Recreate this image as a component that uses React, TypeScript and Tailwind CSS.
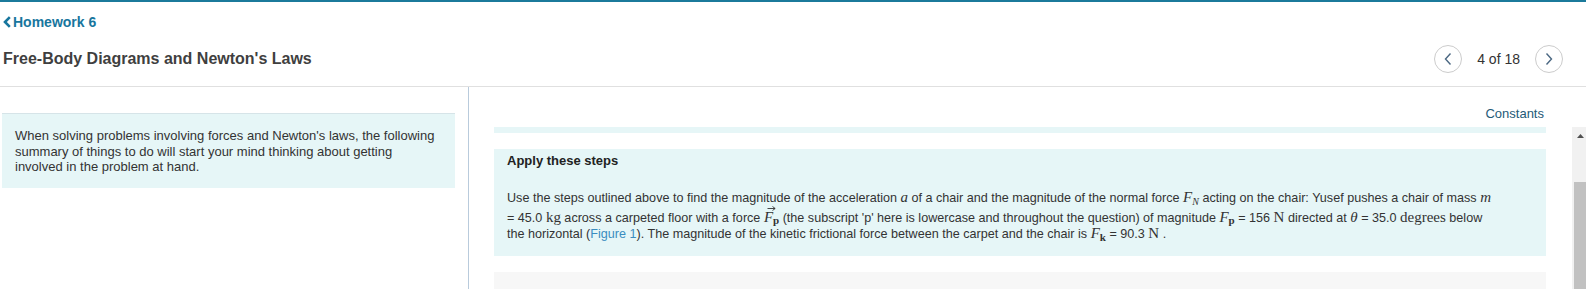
const math = "font-['Liberation_Serif','DejaVu_Serif',serif] text-[15px] leading-none";

const Chevron = ({ dir }: { dir: "left" | "right" }) => (
  <svg width="8" height="14" viewBox="0 0 8 14" aria-hidden="true">
    <polyline
      points={dir === "left" ? "6.5,1.5 1.5,7 6.5,12.5" : "1.5,1.5 6.5,7 1.5,12.5"}
      fill="none"
      stroke="#4a6782"
      strokeWidth="1.4"
    />
  </svg>
);

const NavButton = ({ dir }: { dir: "left" | "right" }) => (
  <button className="flex h-[28px] w-[28px] items-center justify-center rounded-full border border-[#cccccc] bg-white">
    <Chevron dir={dir} />
  </button>
);

const VecF = ({ sub }: { sub: string }) => (
  <span className="relative inline-block pt-[3px]">
    <svg className="absolute left-[3px] top-[-1px]" width="9" height="5" viewBox="0 0 9 5" aria-hidden="true">
      <line x1="0.5" y1="2.5" x2="8" y2="2.5" stroke="#333333" strokeWidth="0.9" />
      <polyline points="5.5,0.5 8.2,2.5 5.5,4.5" fill="none" stroke="#333333" strokeWidth="0.9" />
    </svg>
    <i className={math}>F</i>
    <sub className="font-['Liberation_Serif',serif] text-[11px] font-bold">{sub}</sub>
  </span>
);

export default function App() {
  return (
    <div className="h-[289px] w-[1586px] overflow-hidden border-t-2 border-[#1b7a9b] bg-white font-['Liberation_Sans',Arial,sans-serif] text-[#333333]">
      <header className="border-b border-[#e0e0e0] pb-[13px] pl-[3px] pr-[23px] pt-[11px]">
        <a className="flex h-[18px] items-center gap-[1px] text-[14px] font-bold text-[#18769e]">
          <svg width="9" height="12" viewBox="0 0 9 12" aria-hidden="true">
            <polyline points="6.8,1.2 2,6 6.8,10.8" fill="none" stroke="#18769e" strokeWidth="2.6" />
          </svg>
          Homework 6
        </a>
        <div className="mt-[14px] flex h-[28px] items-center justify-between">
          <h1 className="text-[16px] font-bold text-[#3f3f3f]">Free-Body Diagrams and Newton's Laws</h1>
          <div className="flex items-center gap-[15px]">
            <NavButton dir="left" />
            <span className="text-[14px] text-[#333333]">4 of 18</span>
            <NavButton dir="right" />
          </div>
        </div>
      </header>

      <div className="flex h-[202px]">
        <aside className="w-[469px] shrink-0 border-r border-[#b9cbdc] pl-[2px] pr-[13px] pt-[26px]">
          <div className="border-t border-[#d6e4e8] bg-[#e6f6f7] px-[13px] pb-[13px] pt-[14px] text-[13px] leading-[15.5px]">
            When solving problems involving forces and Newton's laws, the following summary of things to do will start
            your mind thinking about getting involved in the problem at hand.
          </div>
        </aside>

        <main className="flex flex-1 flex-col">
          <div className="pb-[5px] pr-[42px] pt-[19px] text-right text-[13px] leading-[16px] text-[#245a78]">
            Constants
          </div>
          <div className="flex flex-1">
            <div className="flex-1 pl-[25px] pr-[26px]">
              <div className="h-[6px] bg-[#e6f6f7]" />
              <section className="mt-[16px] bg-[#e6f6f7] px-[13px] pb-[13px] pt-[4px]">
                <h2 className="text-[13px] font-bold leading-[16px] text-[#222222]">Apply these steps</h2>
                <p className="mt-[21px] text-[12.6px] leading-[15.6px]">
                  Use the steps outlined above to find the magnitude of the acceleration <i className={math}>a</i> of a
                  chair and the magnitude of the normal force{" "}
                  <span className="whitespace-nowrap">
                    <i className={math}>F</i>
                    <sub className="font-['Liberation_Serif',serif] text-[10px]">
                      <i>N</i>
                    </sub>
                  </span>{" "}
                  acting on the chair: Yusef pushes a chair of mass <i className={math}>m</i>
                  <br />= 45.0 <span className={math}>kg</span> across a carpeted floor with a force <VecF sub="p" />{" "}
                  (the subscript 'p' here is lowercase and throughout the question) of magnitude{" "}
                  <i className={math}>F</i>
                  <sub className="font-['Liberation_Serif',serif] text-[11px] font-bold">p</sub> = 156{" "}
                  <span className={math}>N</span> directed at <i className={math}>θ</i> = 35.0{" "}
                  <span className={math}>degrees</span> below
                  <br />
                  the horizontal (<span className="text-[#3a8dc0]">Figure 1</span>). The magnitude of the kinetic
                  frictional force between the carpet and the chair is <i className={math}>F</i>
                  <sub className="font-['Liberation_Serif',serif] text-[11px] font-bold">k</sub> = 90.3{" "}
                  <span className={math}>N</span> .
                </p>
              </section>
              <div className="mt-[16px] h-[40px] bg-[#f7f7f7]" />
            </div>
            <div className="flex w-[14px] flex-col bg-[#f1f1f1]">
              <div className="flex h-[17px] items-center justify-center pl-[2px]">
                <svg width="7" height="4" viewBox="0 0 7 4" aria-hidden="true">
                  <polygon points="3.5,0 7,4 0,4" fill="#505050" />
                </svg>
              </div>
              <div className="ml-[2px] mt-[38px] flex-1 bg-[#c1c1c1]" />
            </div>
          </div>
        </main>
      </div>
    </div>
  );
}
